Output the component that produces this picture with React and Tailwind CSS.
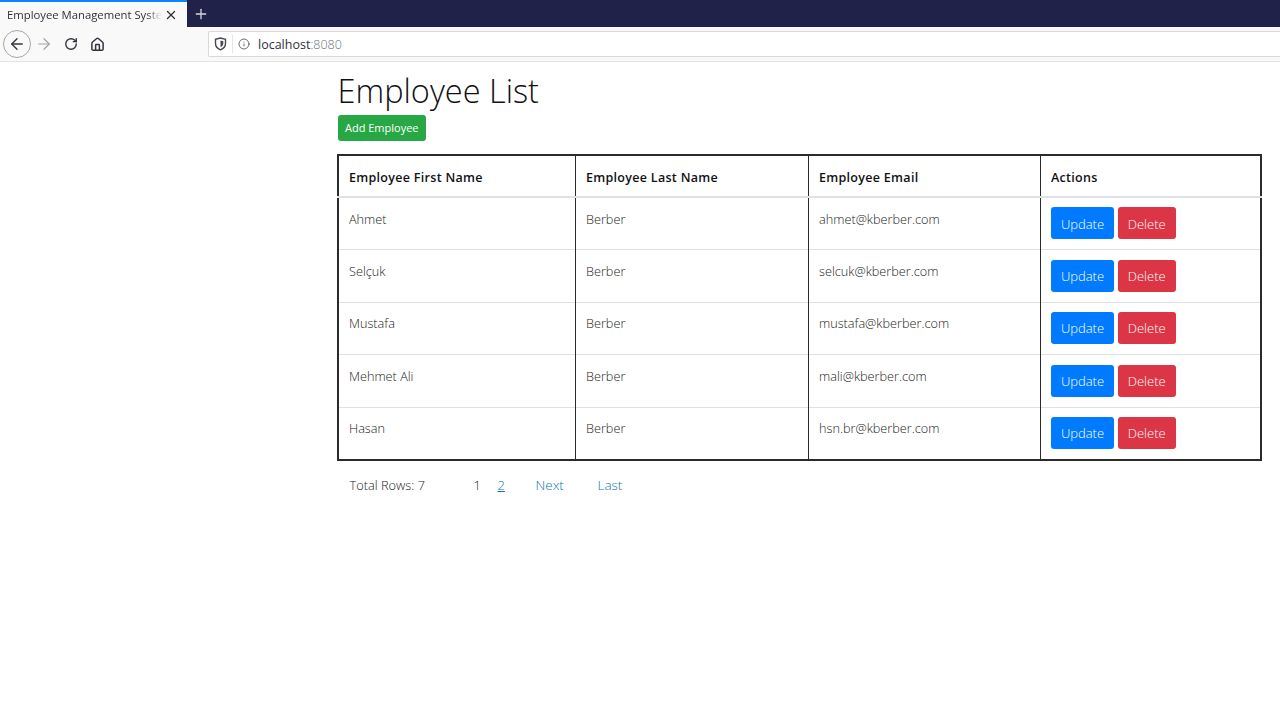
import React from "react";
import { ArrowLeft, ArrowRight, RotateCw, Home, X, Plus, Info } from "lucide-react";

const rows = [
  ["Ahmet", "ahmet@kberber.com"],
  ["Selçuk", "selcuk@kberber.com"],
  ["Mustafa", "mustafa@kberber.com"],
  ["Mehmet Ali", "mali@kberber.com"],
  ["Hasan", "hsn.br@kberber.com"],
];

function Shield() {
  return (
    <svg width="13" height="14" viewBox="0 0 13 14" fill="none" stroke="#4a4a55" strokeWidth="1.4">
      <path d="M1.5 2.2 6.5 1l5 1.2v4.3c0 3-2.2 5.2-5 6.3-2.8-1.1-5-3.3-5-6.3z" />
      <path d="M6.5 3.5l2.8.7v2.4c0 1.6-1.2 2.9-2.8 3.6z" fill="#4a4a55" stroke="none" />
    </svg>
  );
}

export default function App() {
  return (
    <div className="min-h-[720px] bg-white font-['Open_Sans','Noto_Sans',sans-serif] font-light text-[#1b1d20]">
      <div className="flex h-[27px] items-stretch bg-[#20224a]">
        <div className="flex w-[187px] items-center justify-between border-t-2 border-[#0a84ff] bg-[#f9f9fa] pl-[7px] pr-[9px]">
          <span className="w-[155px] overflow-hidden whitespace-nowrap text-[11.3px] font-normal leading-[14px] text-[#30303a] [mask-image:linear-gradient(to_right,black_90%,transparent)]">Employee Management System</span>
          <X size={14} strokeWidth={2.2} color="#30303a" />
        </div>
        <div className="flex w-[28px] items-center justify-center">
          <Plus size={16} strokeWidth={2} color="#d6d6e0" />
        </div>
      </div>
      <div className="flex h-[35px] items-center border-b border-[#e3e3e3] bg-[#f9f9fa] pl-[3px]">
        <div className="flex h-[28px] w-[28px] items-center justify-center rounded-full border border-[#a8a8a8]">
          <ArrowLeft size={18} strokeWidth={1.8} color="#35353f" />
        </div>
        <div className="ml-[4px] flex w-[18px] justify-center">
          <ArrowRight size={18} strokeWidth={1.6} color="#a3a3a8" />
        </div>
        <div className="ml-[10px] flex w-[16px] justify-center">
          <RotateCw size={14} strokeWidth={2.4} color="#35353f" />
        </div>
        <div className="ml-[10px] flex w-[16px] justify-center">
          <Home size={15} strokeWidth={2.4} color="#35353f" />
        </div>
        <div className="ml-[103px] flex h-[26px] flex-1 items-center rounded-l-[2px] border border-r-0 border-[#d9d9d9] bg-white pl-[5px]">
          <Shield />
          <div className="ml-[5px] mr-[5px] h-[18px] w-px bg-[#e4e4e4]" />
          <Info size={12} strokeWidth={1.6} color="#45454f" />
          <span className="ml-[8px] pt-[3px] text-[12.5px] font-normal leading-none text-[#30303a]">
            localhost<span className="font-light text-[#70707a]">:8080</span>
          </span>
        </div>
      </div>
      <div className="pl-[337px] pr-[18px]">
        <h1 className="ml-[0.5px] mt-[7px] h-[44px] text-[32.5px] font-light leading-[44px] text-[#111114]">Employee List</h1>
        <button className="mt-[2px] ml-[0.5px] block h-[26px] w-[88.5px] rounded-[3px] bg-[#28a745] pt-[1px] text-center text-[11px] font-normal text-white">Add Employee</button>
        <table className="mt-[13px] w-[925px] table-fixed border-collapse border-2 border-[#2b2b2b] text-[12.7px]">
          <colgroup>
            <col className="w-[237.5px]" />
            <col className="w-[233px]" />
            <col className="w-[232px]" />
            <col />
          </colgroup>
          <thead>
            <tr className="h-[42px] border-b-2 border-[#dee2e6]">
              {["Employee First Name", "Employee Last Name", "Employee Email", "Actions"].map((h) => (
                <th key={h} className="border-x border-[#2b2b2b] px-[10px] pt-[4px] text-left text-[12.5px] font-semibold tracking-[0.3px] text-[#111114]">{h}</th>
              ))}
            </tr>
          </thead>
          <tbody>
            {rows.map(([name, email]) => (
              <tr key={email} className="h-[52.5px] border-b border-[#dee2e6] last:border-b-0">
                <td className="border-x border-[#2b2b2b] px-[10px] pb-[10px] align-middle leading-[32px]">{name}</td>
                <td className="border-x border-[#2b2b2b] px-[10px] pb-[10px] align-middle leading-[32px]">Berber</td>
                <td className="border-x border-[#2b2b2b] px-[10px] pb-[10px] align-middle leading-[32px]">{email}</td>
                <td className="border-x border-[#2b2b2b] px-[10px] pb-[0.5px] align-middle">
                  <div className="flex gap-[3.5px]">
                    <button className="h-[32px] w-[63px] rounded-[3px] bg-[#007bff] pt-[2px] text-[13px] font-light text-white">Update</button>
                    <button className="h-[32px] w-[58.5px] rounded-[3px] bg-[#dc3545] pt-[2px] text-[13px] font-light text-white">Delete</button>
                  </div>
                </td>
              </tr>
            ))}
          </tbody>
        </table>
        <div className="mt-[15px] flex h-[20px] items-center pl-[12.5px] text-[12.8px] leading-none">
          <span className="w-[124px]">Total Rows: 7</span>
          <span className="w-[24px]">1</span>
          <span className="w-[38px] text-[#0b76b0] underline">2</span>
          <span className="w-[62px] text-[13.5px] text-[#0b76b0]">Next</span>
          <span className="text-[13.5px] text-[#0b76b0]">Last</span>
        </div>
      </div>
    </div>
  );
}
